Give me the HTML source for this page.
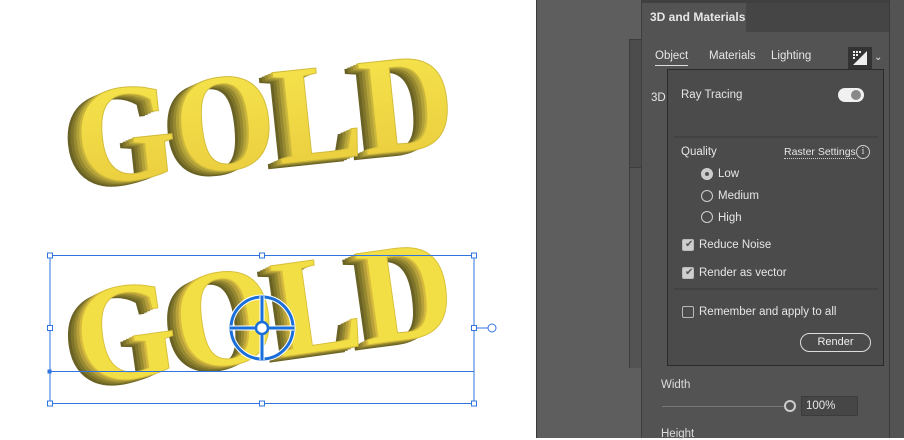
<!DOCTYPE html>
<html><head><meta charset="utf-8"><style>
*{margin:0;padding:0;box-sizing:border-box}
body{width:904px;height:438px;overflow:hidden;position:relative;font-family:"Liberation Sans",sans-serif;background:#fff}
.abs{position:absolute}
.t{color:#e6e6e6;font-size:11.5px;position:absolute;white-space:nowrap}
.radio{position:absolute;width:12px;height:12px;border:1px solid #d0d0d0;border-radius:50%}
.chk{position:absolute;width:12px;height:12px;border:1px solid #bbb;border-radius:2px;background:#cfcfcf}
</style></head><body>
<svg class="abs" style="left:0;top:0" width="536" height="438">
<defs>
<linearGradient id="fr" x1="0" y1="0" x2="0" y2="1"><stop offset="0" stop-color="#f7e84e"/><stop offset="1" stop-color="#e9c93c"/></linearGradient>
</defs>
<g font-family="Liberation Serif" font-weight="bold" font-size="140">
<g transform="translate(80,185) rotate(-6)">
<text x="0" y="0" textLength="380" lengthAdjust="spacingAndGlyphs" fill="#6a6224" transform="translate(-14,4)">GOLD</text>
<text x="0" y="0" textLength="380" lengthAdjust="spacingAndGlyphs" fill="#7e742a" transform="translate(-11,3)">GOLD</text>
<text x="0" y="0" textLength="380" lengthAdjust="spacingAndGlyphs" fill="#968931" transform="translate(-8,2)">GOLD</text>
<text x="0" y="0" textLength="380" lengthAdjust="spacingAndGlyphs" fill="#b1a138" transform="translate(-5,1)">GOLD</text>
<text x="0" y="0" textLength="380" lengthAdjust="spacingAndGlyphs" fill="#c9b53e" transform="translate(-2,0)">GOLD</text>
<text x="0" y="0" textLength="380" lengthAdjust="spacingAndGlyphs" fill="url(#fr)" stroke="#d0bb3a" stroke-width="1">GOLD</text>
</g>
<g transform="translate(82,385) rotate(-8)">
<text x="0" y="0" textLength="380" lengthAdjust="spacingAndGlyphs" fill="#6a6224" transform="translate(-14,4)">GOLD</text>
<text x="0" y="0" textLength="380" lengthAdjust="spacingAndGlyphs" fill="#7e742a" transform="translate(-11,3)">GOLD</text>
<text x="0" y="0" textLength="380" lengthAdjust="spacingAndGlyphs" fill="#968931" transform="translate(-8,2)">GOLD</text>
<text x="0" y="0" textLength="380" lengthAdjust="spacingAndGlyphs" fill="#b8a03a" transform="translate(-5,1)">GOLD</text>
<text x="0" y="0" textLength="380" lengthAdjust="spacingAndGlyphs" fill="#d4b840" transform="translate(-2,0)">GOLD</text>
<text x="0" y="0" textLength="380" lengthAdjust="spacingAndGlyphs" fill="#f2df45" stroke="#d8bf3a" stroke-width="1">GOLD</text>
</g>
</g>
<g stroke="#2f74e0" fill="none" stroke-width="1">
<rect x="50" y="255.5" width="424" height="148"/>
<line x1="50" y1="371.5" x2="474" y2="371.5"/>
<line x1="474" y1="328" x2="488" y2="328"/>
<circle cx="492" cy="328" r="4" fill="#fff"/>
<g fill="#fff">
<rect x="47.5" y="253" width="5" height="5"/><rect x="259.5" y="253" width="5" height="5"/><rect x="471.5" y="253" width="5" height="5"/>
<rect x="47.5" y="325.5" width="5" height="5"/><rect x="471.5" y="325.5" width="5" height="5"/>
<rect x="47.5" y="401" width="5" height="5"/><rect x="259.5" y="401" width="5" height="5"/><rect x="471.5" y="401" width="5" height="5"/>
</g>
<rect x="48" y="370" width="3" height="3" fill="#2f74e0"/>
</g>
<g>
<circle cx="262" cy="328" r="31" fill="none" stroke="#fff" stroke-width="5"/>
<circle cx="262" cy="328" r="31" fill="none" stroke="#1a6fd8" stroke-width="3"/>
<line x1="230" y1="328" x2="294" y2="328" stroke="#fff" stroke-width="5"/>
<line x1="262" y1="296" x2="262" y2="360" stroke="#fff" stroke-width="5"/>
<line x1="230" y1="328" x2="294" y2="328" stroke="#1a6fd8" stroke-width="3"/>
<line x1="262" y1="296" x2="262" y2="360" stroke="#1a6fd8" stroke-width="3"/>
<circle cx="262" cy="328" r="6" fill="#fff" stroke="#1a6fd8" stroke-width="2.5"/>
</g>
</svg>
<div class="abs" style="left:536px;top:0;width:368px;height:438px;background:#5e5e5e"></div>
<div class="abs" style="left:536px;top:0;width:1px;height:438px;background:#3a3a3a"></div>
<div class="abs" style="left:629px;top:39px;width:14px;height:129px;background:#4c4c4c;border:1px solid #3c3c3c"></div>
<div class="abs" style="left:629px;top:168px;width:14px;height:200px;background:#535353;border-left:1px solid #3c3c3c"></div>
<div class="abs" style="left:641px;top:0;width:248px;height:438px;background:#535353;border-left:1px solid #3e3e3e"></div>
<div class="abs" style="left:746px;top:0;width:143px;height:32px;background:#454545"></div>
<div class="abs" style="left:641px;top:0;width:248px;height:3px;background:#404040"></div>
<div class="t" style="left:650px;top:10px;font-weight:bold;font-size:12px">3D and Materials</div>
<div class="t" style="left:655px;top:50px">Object</div>
<div class="abs" style="left:655px;top:65px;width:33px;height:1px;background:#ddd"></div>
<div class="t" style="left:709px;top:50px">Materials</div>
<div class="t" style="left:771px;top:50px">Lighting</div>
<div class="abs" style="left:848px;top:47px;width:24px;height:22px;background:#333"></div>
<svg class="abs" style="left:852px;top:50px" width="16" height="16"><path d="M15 1 V15 H1 L15 1Z" fill="#eee"/><g fill="#eee"><rect x="1" y="1" width="2" height="2"/><rect x="4" y="1" width="2" height="2"/><rect x="7" y="1" width="2" height="2"/><rect x="1" y="4" width="2" height="2"/><rect x="4" y="4" width="2" height="2"/><rect x="1" y="7" width="2" height="2"/></g></svg>
<div class="t" style="left:874px;top:52px;font-size:10px">⌄</div>
<div class="t" style="left:651px;top:92px">3D</div>
<div class="t" style="left:661px;top:379px;color:#ddd">Width</div>
<div class="abs" style="left:662px;top:406px;width:122px;height:1px;background:#777"></div>
<div class="abs" style="left:784px;top:400px;width:12px;height:12px;border:2px solid #ccc;border-radius:50%"></div>
<div class="abs" style="left:801px;top:396px;width:57px;height:20px;background:#464646;border:1px solid #3c3c3c"></div>
<div class="t" style="left:806px;top:400px">100%</div>
<div class="t" style="left:661px;top:428px;color:#ddd">Height</div>
<div class="abs" style="left:889px;top:0;width:15px;height:438px;background:#535353;border-left:1px solid #3a3a3a"></div>
<div class="abs" style="left:667px;top:69px;width:217px;height:297px;background:#4b4b4b;border:1px solid #2a2a2a"></div>
<div class="t" style="left:681px;top:89px">Ray Tracing</div>
<div class="abs" style="left:838px;top:88px;width:26px;height:14px;background:#f0f0f0;border-radius:7px"></div>
<div class="abs" style="left:851px;top:90px;width:10px;height:10px;background:#888;border-radius:50%"></div>
<div class="abs" style="left:674px;top:136px;width:204px;height:2px;background:#424242"></div>
<div class="t" style="left:681px;top:146px">Quality</div>
<div class="t" style="left:784px;top:146px;font-size:10.5px;border-bottom:1px dotted #ccc">Raster Settings</div>
<div class="abs" style="left:856px;top:145px;width:14px;height:14px;border:1px solid #ccc;border-radius:50%;color:#ddd;font-size:10px;text-align:center;line-height:12px;font-family:'Liberation Serif'">i</div>
<div class="radio" style="left:701px;top:168px;background:#ccc"><div class="abs" style="left:3px;top:3px;width:4px;height:4px;background:#555;border-radius:50%"></div></div>
<div class="t" style="left:718px;top:168px">Low</div>
<div class="radio" style="left:701px;top:190px"></div>
<div class="t" style="left:718px;top:190px">Medium</div>
<div class="radio" style="left:701px;top:211px"></div>
<div class="t" style="left:718px;top:212px">High</div>
<div class="chk" style="left:682px;top:239px"></div><div class="abs" style="left:685px;top:239px;color:#555;font-size:10px">✔</div>
<div class="t" style="left:699px;top:239px">Reduce Noise</div>
<div class="chk" style="left:682px;top:267px"></div><div class="abs" style="left:685px;top:267px;color:#555;font-size:10px">✔</div>
<div class="t" style="left:699px;top:267px">Render as vector</div>
<div class="abs" style="left:674px;top:288px;width:204px;height:2px;background:#424242"></div>
<div class="chk" style="left:682px;top:306px;background:none"></div>
<div class="t" style="left:699px;top:306px">Remember and apply to all</div>
<div class="abs" style="left:800px;top:333px;width:71px;height:19px;border:1px solid #ddd;border-radius:10px;color:#eee;font-size:11px;text-align:center;line-height:17px">Render</div>
</body></html>
